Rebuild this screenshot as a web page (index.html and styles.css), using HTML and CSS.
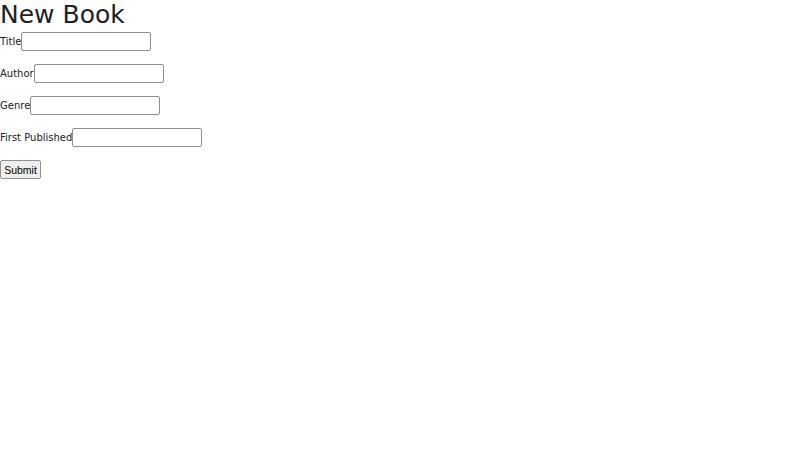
FILE: index.html
```html
<!DOCTYPE html>
<html lang="en">
<head>
<meta charset="utf-8">
<title>New Book</title>
<link rel="stylesheet" href="styles.css">
</head>
<body>
<h1 class="title">New Book</h1>
<form class="book-form">
  <div class="field"><label class="field-label" for="title">Title</label><input class="field-input" id="title" type="text"></div>
  <div class="field"><label class="field-label" for="author">Author</label><input class="field-input" id="author" type="text"></div>
  <div class="field"><label class="field-label" for="genre">Genre</label><input class="field-input" id="genre" type="text"></div>
  <div class="field"><label class="field-label" for="published">First Published</label><input class="field-input" id="published" type="text"></div>
  <div class="field"><button class="submit" type="submit">Submit</button></div>
</form>
</body>
</html>
```
FILE: styles.css
```css
html, body {
  margin: 0;
  padding: 0;
  background: #ffffff;
}
body {
  font-family: "DejaVu Sans", sans-serif;
  color: #222222;
}
.title {
  margin: 0 0 3px 0;
  font-size: 25px;
  font-weight: normal;
  line-height: 29px;
}
.book-form {
  display: flex;
  flex-direction: column;
  gap: 13px;
  margin: 0;
}
.field {
  display: flex;
  align-items: center;
  height: 19px;
}
.field-label {
  font-size: 10px;
  line-height: 12px;
}
.field-input {
  box-sizing: border-box;
  width: 130px;
  height: 19px;
  margin: 0;
  padding: 1px 2px;
  border: 1px solid #8f8f8f;
  border-radius: 2px;
  background: #ffffff;
  font-size: 10px;
}
.submit {
  box-sizing: border-box;
  width: 41px;
  height: 19px;
  margin: 0;
  padding: 0;
  border: 1px solid #8f8f8f;
  border-radius: 2px;
  background: #efefef;
  color: #000000;
  font-family: "Liberation Sans", Arial, sans-serif;
  font-size: 10.5px;
  text-align: center;
}
```
